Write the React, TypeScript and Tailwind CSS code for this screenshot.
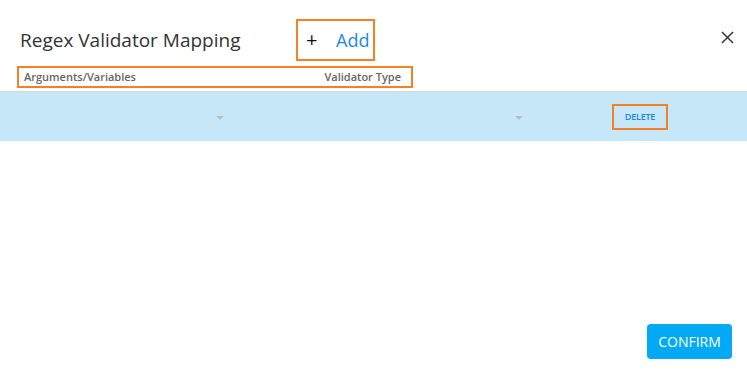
export default function App() {
    return (
        <div className="relative w-[747px] h-[387px] bg-white text-[#333] font-['Open_Sans',sans-serif] overflow-hidden">
            <div className="flex items-center pt-[19px] pl-5">
                <h1 className="text-[19px] leading-none w-[276px] text-[#333]">Regex Validator Mapping</h1>
                <button className="flex items-center h-[42px] w-[79px] border-2 border-[#f58025] pl-[8px]">
                    <span className="text-[20px] leading-none text-[#111] w-[30px] text-left">+</span>
                    <span className="text-[18px] leading-none text-[#1e88e5]">Add</span>
                </button>
            </div>
            <button className="absolute top-[29px] right-[12px] w-4 h-4 flex items-center justify-center text-[#333]">
                <svg className="w-[13px] h-[13px]" viewBox="0 0 14 14" fill="none" stroke="currentColor" strokeWidth="1.6">
                    <path d="M1 1L13 13M13 1L1 13" />
                </svg>
            </button>
            <div className="ml-[17px] mt-[5px] w-[396px] h-[22px] border-2 border-[#f58025] flex items-center justify-between pl-[5px] pr-[10px] text-[11px] font-semibold text-[#666]">
                <span>Arguments/Variables</span>
                <span>Validator Type</span>
            </div>
            <div className="mt-[3px] border-t border-[#d6d6d6] h-[50px] bg-[#c5e7f7] flex items-center">
                <div className="w-[227px] flex justify-end pr-[3px]">
                    <span className="w-0 h-0 border-l-[4px] border-r-[4px] border-t-[4px] border-l-transparent border-r-transparent border-t-[#bdbdbd] mt-[2px]" />
                </div>
                <div className="w-[299px] flex justify-end pr-[3px]">
                    <span className="w-0 h-0 border-l-[4px] border-r-[4px] border-t-[4px] border-l-transparent border-r-transparent border-t-[#bdbdbd] mt-[2px]" />
                </div>
                <button className="ml-[86px] w-[56px] h-[26px] border-2 border-[#f58025] flex items-center justify-center text-[9px] font-semibold text-[#1e88e5] tracking-tight">
                    DELETE
                </button>
            </div>
            <button className="absolute left-[647px] top-[324px] w-[85px] h-[35px] rounded-[4px] bg-[#03a9f4] text-white text-[14px] flex items-center justify-center">
                CONFIRM
            </button>
        </div>
    );
}
